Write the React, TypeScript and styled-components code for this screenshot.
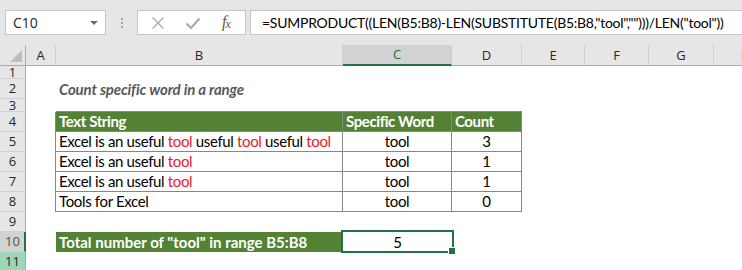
import React from 'react'
import styled, { createGlobalStyle, css } from 'styled-components'

const GlobalStyle = createGlobalStyle`
  html, body {
    margin: 0;
    padding: 0;
    background: #ffffff;
    overflow: hidden;
  }
  * {
    box-sizing: border-box;
  }
`

const Frame = styled.div`
  width: 742px;
  height: 270px;
  overflow: hidden;
  background: #ffffff;
  font-family: Lato, 'Open Sans', sans-serif;
`

// formula bar strip
const TopBar = styled.div`
  height: 45px;
  background: #e6e6e6;
  display: flex;
  align-items: flex-start;
  padding: 10px 0 0 5px;

  & > * {
    flex-shrink: 0;
  }
`

const NameBox = styled.div`
  width: 101px;
  height: 25px;
  background: #ffffff;
  border: 1px solid #c6c6c6;
  display: flex;
  align-items: center;
  justify-content: space-between;
  padding: 0 6px 0 7px;
  font-family: 'Open Sans', sans-serif;
  font-size: 14px;
  color: #262626;
`

const DropArrow = styled.span`
  width: 0;
  height: 0;
  border-left: 4px solid transparent;
  border-right: 4px solid transparent;
  border-top: 4px solid #6e6e6e;
  margin-right: 1px;
`

const Grip = styled.div`
  width: 31px;
  height: 25px;
  display: flex;
  flex-direction: column;
  align-items: center;
  justify-content: center;
  gap: 2px;

  span {
    width: 2px;
    height: 2px;
    background: #a6a6a6;
  }
`

const FormulaButtons = styled.div`
  width: 109px;
  height: 25px;
  background: #ffffff;
  border: 1px solid #c6c6c6;
  display: flex;
  align-items: center;
  padding-left: 11px;
  gap: 17px;
`

const ToolIcon = styled.svg`
  width: 18px;
  height: 18px;
  flex-shrink: 0;
`

const FxLabel = styled.span`
  font-family: 'Liberation Serif', serif;
  font-style: italic;
  font-size: 16px;
  color: #595959;
  letter-spacing: -1px;
  margin-left: 3px;

  sub {
    font-size: 12px;
    vertical-align: -1px;
  }
`

const FormulaInput = styled.div`
  flex: 1 1 auto;
  min-width: 0;
  height: 25px;
  margin-left: 4px;
  margin-right: -4px;
  background: #ffffff;
  border: 1px solid #c6c6c6;
  display: flex;
  align-items: center;
  padding-left: 11px;
  font-size: 14px;
  letter-spacing: -0.25px;
  color: #000000;
  white-space: nowrap;
  overflow: hidden;
`

// sheet grid
const Sheet = styled.div`
  display: grid;
  grid-template-columns: 26px 30px 287px 109px 70px 63px 64px 65px 64px;
  grid-template-rows: 21px 13px 20px 13px repeat(8, 20px);
`

const Corner = styled.div`
  background: #e6e6e6;
  border-right: 1px solid #ababab;
  border-bottom: 1px solid #ababab;
  position: relative;

  &::after {
    content: '';
    position: absolute;
    right: 3px;
    bottom: 3px;
    width: 0;
    height: 0;
    border-left: 12px solid transparent;
    border-bottom: 12px solid #bfbfbf;
  }
`

const ColHead = styled.div<{ $selected?: boolean }>`
  background: ${p => (p.$selected ? '#d2d2d2' : '#e6e6e6')};
  border-right: 1px solid #d0d0d0;
  border-bottom: ${p => (p.$selected ? '2px solid #217346' : '1px solid #ababab')};
  display: flex;
  align-items: center;
  justify-content: center;
  font-family: 'Open Sans', sans-serif;
  font-size: 13px;
  color: ${p => (p.$selected ? '#1e6b41' : '#262626')};
  padding-bottom: 1px;
`

const RowHead = styled.div<{ $selected?: boolean; $hover?: boolean }>`
  background: ${p => (p.$selected ? '#d2d2d2' : p.$hover ? '#9fd5b7' : '#e6e6e6')};
  border-bottom: 1px solid #d0d0d0;
  border-right: ${p => (p.$selected ? '2px solid #217346' : '1px solid #ababab')};
  display: flex;
  align-items: center;
  justify-content: center;
  overflow: hidden;
  font-family: 'Open Sans', sans-serif;
  font-size: 13px;
  line-height: 1;
  color: ${p => (p.$selected ? '#3d5a48' : '#262626')};
  padding-left: ${p => (p.$selected ? '1px' : '0')};
`

type CellKind = 'blank' | 'edge' | 'cap' | 'head' | 'body' | 'total' | 'result'

const rule = '1px solid #878787'

const Cell = styled.div<{ $kind?: CellKind; $align?: 'left' | 'center' }>`
  position: relative;
  display: flex;
  align-items: center;
  justify-content: ${p => (p.$align === 'center' ? 'center' : 'flex-start')};
  padding: 0 3px 1px;
  font-size: 15px;
  letter-spacing: -0.35px;
  color: #000000;
  white-space: pre;

  ${p => p.$kind === 'edge' && css`border-right: ${rule};`}
  ${p => p.$kind === 'cap' && css`border-bottom: ${rule};`}
  ${p =>
    (p.$kind === 'head' || p.$kind === 'body') &&
    css`
      border-right: ${rule};
      border-bottom: ${rule};
    `}
  ${p =>
    p.$kind === 'head' &&
    css`
      letter-spacing: -0.4px;
    `}
  ${p =>
    p.$kind === 'total' &&
    css`
      letter-spacing: 0;
    `}
  ${p =>
    (p.$kind === 'head' || p.$kind === 'total') &&
    css`
      background: #548235;
      color: #ffffff;
      font-weight: 700;
    `}
`

const Title = styled.span`
  font-style: italic;
  font-weight: 700;
  color: #595959;
  font-size: 15px;
  letter-spacing: -0.15px;
  margin-top: 1px;
`

const Red = styled.span`
  color: #e8202a;
`

const Selection = styled.div`
  position: absolute;
  top: -2px;
  left: -2px;
  right: -2px;
  bottom: -1px;
  border: 2px solid #217346;
  pointer-events: none;

  &::after {
    content: '';
    position: absolute;
    right: -4px;
    bottom: -4px;
    width: 6px;
    height: 6px;
    background: #217346;
    border: 1px solid #ffffff;
  }
`

const columns = ['A', 'B', 'C', 'D', 'E', 'F', 'G', 'H']

const words: { text: React.ReactNode; count: number }[] = [
  {
    text: (
      <span>
        Excel is an useful <Red>tool</Red> useful <Red>tool</Red> useful <Red>tool</Red>
      </span>
    ),
    count: 3,
  },
  { text: <span>Excel is an useful <Red>tool</Red></span>, count: 1 },
  { text: <span>Excel is an useful <Red>tool</Red></span>, count: 1 },
  { text: 'Tools for Excel', count: 0 },
]

const Tail = ({ n }: { n: number }) => (
  <>
    {Array.from({ length: n }).map((_, i) => (
      <Cell key={i} />
    ))}
  </>
)

export default function App() {
  return (
    <Frame>
      <GlobalStyle />
      <TopBar>
        <NameBox>
          C10
          <DropArrow />
        </NameBox>
        <Grip>
          <span />
          <span />
          <span />
        </Grip>
        <FormulaButtons>
          <ToolIcon viewBox="0 0 18 18">
            <path d="M3.5 3.5 L14.5 14.5 M14.5 3.5 L3.5 14.5" stroke="#a8a8a8" strokeWidth="1.3" fill="none" />
          </ToolIcon>
          <ToolIcon viewBox="0 0 18 18">
            <path d="M2.5 9.5 L7 14 L15.5 4.5" stroke="#a8a8a8" strokeWidth="2" fill="none" />
          </ToolIcon>
          <FxLabel>
            f<sub>x</sub>
          </FxLabel>
        </FormulaButtons>
        <FormulaInput>=SUMPRODUCT((LEN(B5:B8)-LEN(SUBSTITUTE(B5:B8,"tool","")))/LEN("tool"))</FormulaInput>
      </TopBar>

      <Sheet>
        <Corner />
        {columns.map(c => (
          <ColHead key={c} $selected={c === 'C'}>
            {c}
          </ColHead>
        ))}

        <RowHead>1</RowHead>
        <Tail n={8} />

        <RowHead>2</RowHead>
        <Cell />
        <Cell>
          <Title>Count specific word in a range</Title>
        </Cell>
        <Tail n={6} />

        <RowHead>3</RowHead>
        <Cell />
        <Cell $kind="cap" />
        <Cell $kind="cap" />
        <Cell $kind="cap" />
        <Tail n={4} />

        <RowHead>4</RowHead>
        <Cell $kind="edge" />
        <Cell $kind="head">Text String</Cell>
        <Cell $kind="head">Specific Word</Cell>
        <Cell $kind="head">Count</Cell>
        <Tail n={4} />

        {words.map((w, i) => (
          <React.Fragment key={i}>
            <RowHead>{i + 5}</RowHead>
            <Cell $kind="edge" />
            <Cell $kind="body">{w.text}</Cell>
            <Cell $kind="body" $align="center">
              tool
            </Cell>
            <Cell $kind="body" $align="center">
              {w.count}
            </Cell>
            <Tail n={4} />
          </React.Fragment>
        ))}

        <RowHead>9</RowHead>
        <Tail n={8} />

        <RowHead $selected>10</RowHead>
        <Cell />
        <Cell $kind="total">Total number of "tool" in range B5:B8</Cell>
        <Cell $kind="result" $align="center">
          5
          <Selection />
        </Cell>
        <Tail n={5} />

        <RowHead $hover>11</RowHead>
        <Tail n={8} />
      </Sheet>
    </Frame>
  )
}
